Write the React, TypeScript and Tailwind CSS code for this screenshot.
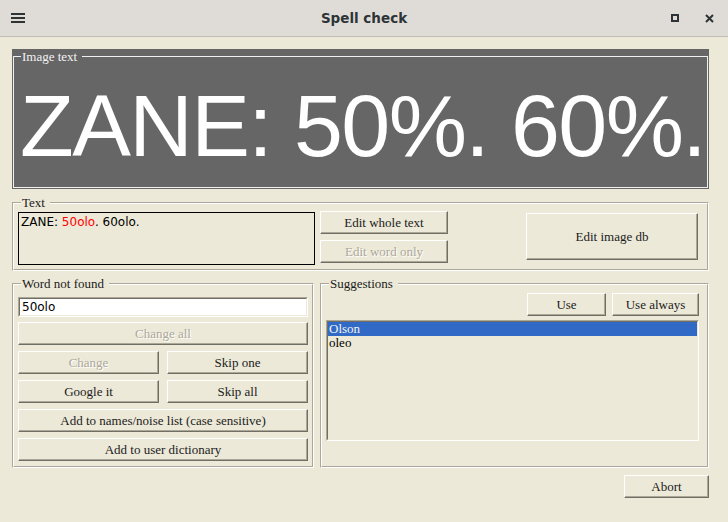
import type { ReactNode } from 'react';

const serif = "font-['Liberation_Serif',serif]";
const sans = "font-['DejaVu_Sans',sans-serif]";

function Btn({
  children,
  disabled,
  className = '',
}: {
  children: ReactNode;
  disabled?: boolean;
  className?: string;
}) {
  return (
    <button
      type="button"
      disabled={disabled}
      className={`flex h-[23px] shrink-0 items-center justify-center border border-t-white border-l-white border-r-[#716f64] border-b-[#716f64] bg-[#ece9d8] pb-[1px] shadow-[inset_-1px_-1px_0_#aca899] text-[13px] leading-[15px] ${serif} ${
        disabled ? 'text-[#aca899] [text-shadow:1px_1px_0_#ffffff]' : 'text-[#1b1b1b]'
      } ${className}`}
    >
      {children}
    </button>
  );
}

function Group({
  label,
  className = '',
  innerClassName = '',
  children,
}: {
  label: string;
  className?: string;
  innerClassName?: string;
  children: ReactNode;
}) {
  return (
    <div
      className={`relative border border-t-[#aca899] border-l-[#aca899] border-r-white border-b-white ${className}`}
    >
      <div
        className={`h-full border border-t-white border-l-white border-r-[#aca899] border-b-[#aca899] ${innerClassName}`}
      >
        {children}
      </div>
      <span
        className={`absolute left-[8px] top-[-8px] bg-[#ece9d8] pl-[1px] pr-[5px] text-[13px] leading-[15px] text-[#1b1b1b] ${serif}`}
      >
        {label}
      </span>
    </div>
  );
}

function TitleBar() {
  return (
    <div className="grid h-[37px] shrink-0 grid-cols-[1fr_auto_1fr] items-center border-b border-[#c1bcb5] bg-[#dfdcd8] px-[11px]">
      <svg width="14" height="10" viewBox="0 0 14 10" aria-hidden="true">
        <rect x="0" y="0" width="14" height="2" fill="#2e3436" />
        <rect x="0" y="4" width="14" height="2" fill="#2e3436" />
        <rect x="0" y="8" width="14" height="2" fill="#2e3436" />
      </svg>
      <span className={`text-center text-[13.5px] font-bold text-[#2e3436] ${sans}`}>
        Spell check
      </span>
      <div className="flex items-center justify-end gap-[26px] pr-[3px]">
        <svg width="8" height="8" viewBox="0 0 8 8" aria-hidden="true">
          <rect x="1" y="1" width="6" height="6" fill="none" stroke="#2e3436" strokeWidth="2" />
        </svg>
        <svg width="9" height="9" viewBox="0 0 9 9" aria-hidden="true">
          <path d="M1 1 L8 8 M8 1 L1 8" stroke="#2e3436" strokeWidth="2" />
        </svg>
      </div>
    </div>
  );
}

export default function App() {
  return (
    <div className="flex h-[522px] w-[728px] flex-col overflow-hidden bg-[#ece9d8]">
      <TitleBar />

      <div className="flex w-[709px] flex-col pl-[12px]">
        {/* Image text */}
        <div className="relative mt-[12px] h-[140px] bg-[#666666] px-[1px] pb-[1px] pt-[7px]">
          <div className="h-full overflow-hidden border border-[#f0f0f0] pl-[6px] pt-[25px]">
            <div className="whitespace-nowrap font-['Liberation_Sans',Arial,sans-serif] text-[88px] leading-[88px] tracking-[-1.6px] text-white">
              ZANE: 50%. 60%.
            </div>
          </div>
          <span
            className={`absolute left-[9px] top-[0px] bg-[#666666] pl-[1px] pr-[5px] text-[13px] leading-[15px] text-[#f2f2f2] ${serif}`}
          >
            Image text
          </span>
        </div>

        {/* Text */}
        <Group label="Text" className="mt-[13px] h-[69px]" innerClassName="flex items-start pl-[4px] pt-[7px]">
          <div
            className={`mt-[1px] h-[53px] w-[297px] border border-black px-[2px] pt-[2px] text-[12px] leading-[14px] text-black ${sans}`}
          >
            ZANE: <span className="text-[#ff0000]">50olo</span>. 60olo.
          </div>
          <div className="ml-[5px] flex flex-col gap-[6px]">
            <Btn className="w-[128px]">Edit whole text</Btn>
            <Btn className="w-[128px]" disabled>
              Edit word only
            </Btn>
          </div>
          <Btn className="ml-auto mr-[9px] mt-[2px] !h-[47px] w-[172px]">Edit image db</Btn>
        </Group>

        {/* Bottom row */}
        <div className="mt-[12px] flex h-[185px] gap-[6px]">
          <Group label="Word not found" className="w-[302px]" innerClassName="flex flex-col px-[4px] pt-[12px]">
            <div className="h-[20px] w-[290px] border border-t-[#aca899] border-l-[#aca899] border-r-white border-b-white bg-white">
              <div
                className={`h-full border border-t-[#716f64] border-l-[#716f64] border-r-[#ece9d8] border-b-[#ece9d8] pl-[2px] pt-[1px] text-[12px] leading-[14px] text-black ${sans}`}
              >
                50olo
              </div>
            </div>
            <Btn className="mt-[5px] w-[290px]" disabled>
              Change all
            </Btn>
            <div className="mt-[6px] grid grid-cols-2 gap-x-[8px] gap-y-[6px]">
              <Btn disabled>Change</Btn>
              <Btn>Skip one</Btn>
              <Btn>Google it</Btn>
              <Btn>Skip all</Btn>
            </div>
            <Btn className="mt-[6px] w-[290px]">Add to names/noise list (case sensitive)</Btn>
            <Btn className="mt-[6px] w-[290px]">Add to user dictionary</Btn>
          </Group>

          <Group label="Suggestions" className="w-[389px]" innerClassName="flex flex-col pl-[4px] pr-[8px] pt-[8px]">
            <div className="flex justify-end gap-[6px]">
              <Btn className="w-[79px]">Use</Btn>
              <Btn className="w-[87px]">Use always</Btn>
            </div>
            <div className="mt-[4px] h-[121px] border border-t-[#aca899] border-l-[#aca899] border-r-white border-b-white">
              <div
                className={`h-full border border-t-[#716f64] border-l-[#716f64] border-r-[#ece9d8] border-b-[#ece9d8] text-[13px] leading-[14px] ${serif}`}
              >
                <div className="h-[14px] bg-[#3169c6] pl-[1px] text-[#f4f4f4]">Olson</div>
                <div className="h-[14px] pl-[1px] text-black">oleo</div>
              </div>
            </div>
          </Group>
        </div>

        <Btn className="mt-[7px] w-[85px] self-end">Abort</Btn>
      </div>
    </div>
  );
}
